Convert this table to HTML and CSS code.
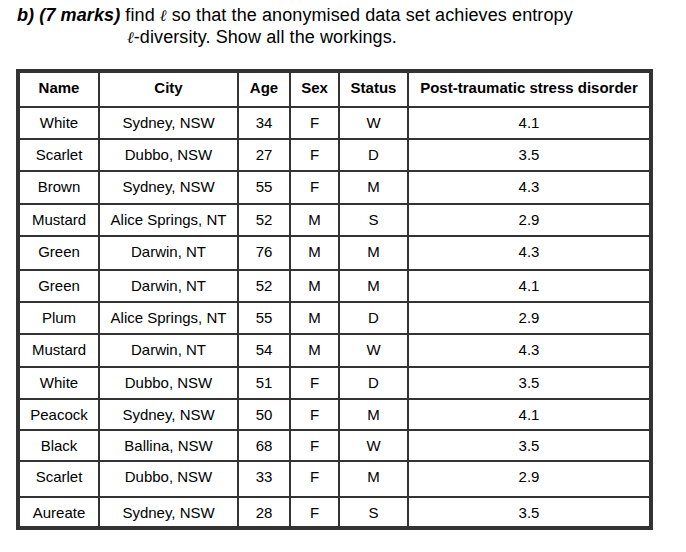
FILE: index.html
```html
<!DOCTYPE html>
<html>
<head>
<meta charset="utf-8">
<link rel="stylesheet" href="styles.css">
</head>
<body>
<p class="question"><b><i>b) (7 marks)</i></b> find <span class="ell">ℓ</span> so that the anonymised data set achieves entropy <span class="nowrap"><span class="ell">ℓ</span>-diversity.</span> Show all the workings.</p>
<table class="data">
  <thead>
    <tr class="h35">
      <th class="c-name">Name</th>
      <th class="c-city">City</th>
      <th class="c-age">Age</th>
      <th class="c-sex">Sex</th>
      <th class="c-status">Status</th>
      <th class="c-ptsd">Post-traumatic stress disorder</th>
    </tr>
  </thead>
  <tbody>
    <tr class="h32"><td>White</td><td>Sydney, NSW</td><td>34</td><td>F</td><td>W</td><td>4.1</td></tr>
    <tr class="h32"><td>Scarlet</td><td>Dubbo, NSW</td><td>27</td><td>F</td><td>D</td><td>3.5</td></tr>
    <tr class="h33"><td>Brown</td><td>Sydney, NSW</td><td>55</td><td>F</td><td>M</td><td>4.3</td></tr>
    <tr class="h32"><td>Mustard</td><td>Alice Springs, NT</td><td>52</td><td>M</td><td>S</td><td>2.9</td></tr>
    <tr class="h34"><td>Green</td><td>Darwin, NT</td><td>76</td><td>M</td><td>M</td><td>4.3</td></tr>
    <tr class="h32"><td>Green</td><td>Darwin, NT</td><td>52</td><td>M</td><td>M</td><td>4.1</td></tr>
    <tr class="h32"><td>Plum</td><td>Alice Springs, NT</td><td>55</td><td>M</td><td>D</td><td>2.9</td></tr>
    <tr class="h33"><td>Mustard</td><td>Darwin, NT</td><td>54</td><td>M</td><td>W</td><td>4.3</td></tr>
    <tr class="h32"><td>White</td><td>Dubbo, NSW</td><td>51</td><td>F</td><td>D</td><td>3.5</td></tr>
    <tr class="h31"><td>Peacock</td><td>Sydney, NSW</td><td>50</td><td>F</td><td>M</td><td>4.1</td></tr>
    <tr class="h31"><td>Black</td><td>Ballina, NSW</td><td>68</td><td>F</td><td>W</td><td>3.5</td></tr>
    <tr class="h36"><td>Scarlet</td><td>Dubbo, NSW</td><td>33</td><td>F</td><td>M</td><td>2.9</td></tr>
    <tr class="h28 last"><td>Aureate</td><td>Sydney, NSW</td><td>28</td><td>F</td><td>S</td><td>3.5</td></tr>
  </tbody>
</table>
</body>
</html>
```

FILE: styles.css
```css
html, body {
  margin: 0;
  padding: 0;
  background: #ffffff;
}

body {
  font-family: "Liberation Sans", Arial, sans-serif;
  color: #000000;
}

.question {
  margin: 0;
  padding: 4px 0 0 127px;
  text-indent: -110px;
  font-size: 18px;
  line-height: 22px;
  letter-spacing: 0.1px;
  width: 470px;
}

.nowrap {
  white-space: nowrap;
}

.ell {
  font-family: "DejaVu Serif", "Liberation Serif", serif;
  font-style: italic;
  font-size: 16px;
  line-height: 1;
}

.data {
  margin: 21px 0 0 16px;
  width: 637px;
  table-layout: fixed;
  border-collapse: separate;
  border-spacing: 0;
  border: 4px solid #333333;
  font-size: 15px;
}

.data th,
.data td {
  box-sizing: border-box;
  padding: 6px 0 0 0;
  line-height: 17px;
  text-align: center;
  vertical-align: top;
  border-right: 2px solid #333333;
  border-bottom: 2px solid #333333;
  white-space: nowrap;
}

.data th {
  font-weight: bold;
}

.data tr > :last-child {
  border-right: none;
}

.data tr.last > td {
  border-bottom: none;
}

.c-name { width: 80px; }
.c-city { width: 139px; }
.c-age { width: 52px; }
.c-sex { width: 49px; }
.c-status { width: 69px; }
.c-ptsd { width: 240px; }

.h28 { height: 28px; }
.h31 { height: 31px; }
.h32 { height: 32px; }
.h33 { height: 33px; }
.h34 { height: 34px; }
.h35 { height: 35px; }
.h36 { height: 36px; }
```
